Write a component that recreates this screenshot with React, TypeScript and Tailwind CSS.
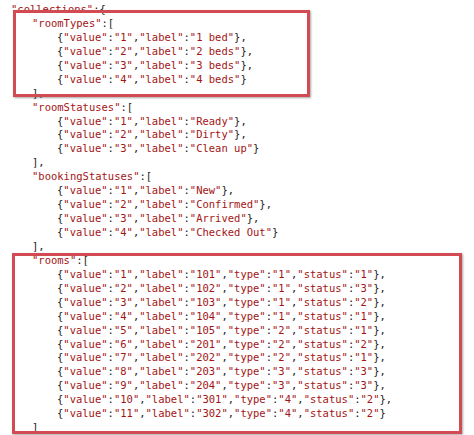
const lines: [number, string][] = [
  [0, '"collections":{'],
  [1, '"roomTypes":['],
  [2, '{"value":"1","label":"1 bed"},'],
  [2, '{"value":"2","label":"2 beds"},'],
  [2, '{"value":"3","label":"3 beds"},'],
  [2, '{"value":"4","label":"4 beds"}'],
  [1, '],'],
  [1, '"roomStatuses":['],
  [2, '{"value":"1","label":"Ready"},'],
  [2, '{"value":"2","label":"Dirty"},'],
  [2, '{"value":"3","label":"Clean up"}'],
  [1, '],'],
  [1, '"bookingStatuses":['],
  [2, '{"value":"1","label":"New"},'],
  [2, '{"value":"2","label":"Confirmed"},'],
  [2, '{"value":"3","label":"Arrived"},'],
  [2, '{"value":"4","label":"Checked Out"}'],
  [1, '],'],
  [1, '"rooms":['],
  [2, '{"value":"1","label":"101","type":"1","status":"1"},'],
  [2, '{"value":"2","label":"102","type":"1","status":"3"},'],
  [2, '{"value":"3","label":"103","type":"1","status":"2"},'],
  [2, '{"value":"4","label":"104","type":"1","status":"1"},'],
  [2, '{"value":"5","label":"105","type":"2","status":"1"},'],
  [2, '{"value":"6","label":"201","type":"2","status":"2"},'],
  [2, '{"value":"7","label":"202","type":"2","status":"1"},'],
  [2, '{"value":"8","label":"203","type":"3","status":"3"},'],
  [2, '{"value":"9","label":"204","type":"3","status":"3"},'],
  [2, '{"value":"10","label":"301","type":"4","status":"2"},'],
  [2, '{"value":"11","label":"302","type":"4","status":"2"}'],
  [1, ']'],
]

const indent = ['pl-[11px]', 'pl-[32px]', 'pl-[57px]']

function Line({ text }: { text: string }) {
  // strings in red, punctuation dark
  const parts = text.split(/("[^"]*")/)
  return (
    <>
      {parts.map((p, i) =>
        p.startsWith('"') ? <span key={i} className="text-[#a31515]">{p}</span> : <span key={i}>{p}</span>
      )}
    </>
  )
}

export default function App() {
  return (
    <div className="relative w-[474px] h-[435px] bg-white overflow-hidden">
      <div className="pt-[3px] font-['DejaVu_Sans_Mono',monospace] text-[10.5px] leading-[13.93px] text-[#222] whitespace-pre">
        {lines.map(([lvl, text], i) => (
          <div key={i} className={indent[lvl]}>
            <Line text={text} />
          </div>
        ))}
      </div>
      <div className="absolute left-[13px] top-[10px] w-[297px] h-[87px] border-[3px] border-[#d24a52] shadow-[1px_1px_2px_rgba(0,0,0,0.35)]" />
      <div className="absolute left-[12px] top-[253px] w-[450px] h-[181px] border-[3px] border-[#d24a52] shadow-[1px_1px_2px_rgba(0,0,0,0.35)]" />
    </div>
  )
}
